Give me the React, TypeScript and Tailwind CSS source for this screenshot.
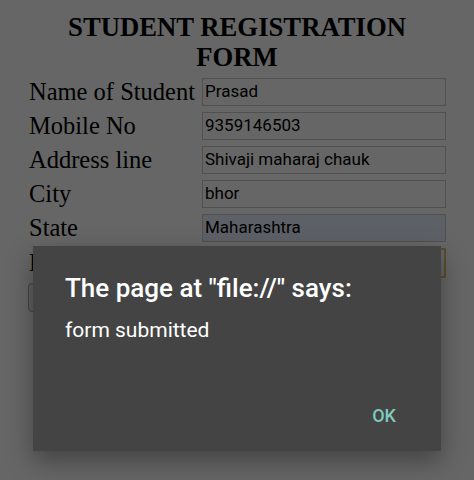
const fields = [
  { label: "Name of Student", value: "Prasad" },
  { label: "Mobile No", value: "9359146503" },
  { label: "Address line", value: "Shivaji maharaj chauk" },
  { label: "City", value: "bhor" },
  { label: "State", value: "Maharashtra", autofill: true },
  { label: "Pincode", value: "", focused: true },
]

export default function App() {
  return (
    <div className="relative h-[480px] w-[474px] overflow-hidden bg-white">
      {/* form page */}
      <div className="flex flex-col pt-[12px]" style={{ fontFamily: '"Liberation Serif", serif' }}>
        <h1 className="mx-auto w-[380px] text-center text-[26.7px] font-bold leading-[30px] text-black">
          STUDENT REGISTRATION FORM
        </h1>
        <div className="mt-[6px] flex flex-col gap-[6px] pl-[29px]">
          {fields.map((f) => (
            <div key={f.label} className="flex items-center">
              <label className="w-[173px] whitespace-nowrap text-[24.5px] leading-[28px] text-black">{f.label}</label>
              <div
                className={
                  f.focused
                    ? "flex h-[30px] w-[244px] items-center border-2 border-[#e2c36a] bg-white px-[2px]"
                    : f.autofill
                      ? "flex h-[28px] w-[244px] items-center border border-[#c8c8c8] bg-[#e8f0fe] px-[2px]"
                      : "flex h-[28px] w-[244px] items-center border border-[#c8c8c8] bg-white px-[2px]"
                }
                style={{ fontFamily: 'Roboto, "Noto Sans", sans-serif' }}
              >
                <span className="text-[17px] text-black">{f.value}</span>
              </div>
            </div>
          ))}
          <div className="-mt-px">
            <button className="-ml-[1px] h-[29px] w-[80px] rounded-sm border border-[#aaaaaa] bg-[#eeeeee] text-[16px] text-black">
              Submit
            </button>
          </div>
        </div>
      </div>

      {/* dim overlay */}
      <div className="absolute inset-0 bg-black/60" />

      {/* alert dialog */}
      <div
        className="absolute left-[33px] top-[246px] flex h-[205px] w-[408px] flex-col bg-[#444444] shadow-[0_10px_24px_rgba(0,0,0,0.35)]"
        style={{ fontFamily: 'Roboto, "Noto Sans", sans-serif' }}
      >
        <div className="whitespace-nowrap pl-[32px] pt-[27px] text-[26px] font-medium leading-[30px] text-white">
          The page at "file://" says:
        </div>
        <div className="pl-[32px] pt-[15px] text-[21px] leading-[24px] text-white">form submitted</div>
        <div className="mt-auto flex justify-end pb-[24px] pr-[45px]">
          <span className="text-[18px] font-medium leading-[22px] text-[#7ecbbf]">OK</span>
        </div>
      </div>
    </div>
  )
}
